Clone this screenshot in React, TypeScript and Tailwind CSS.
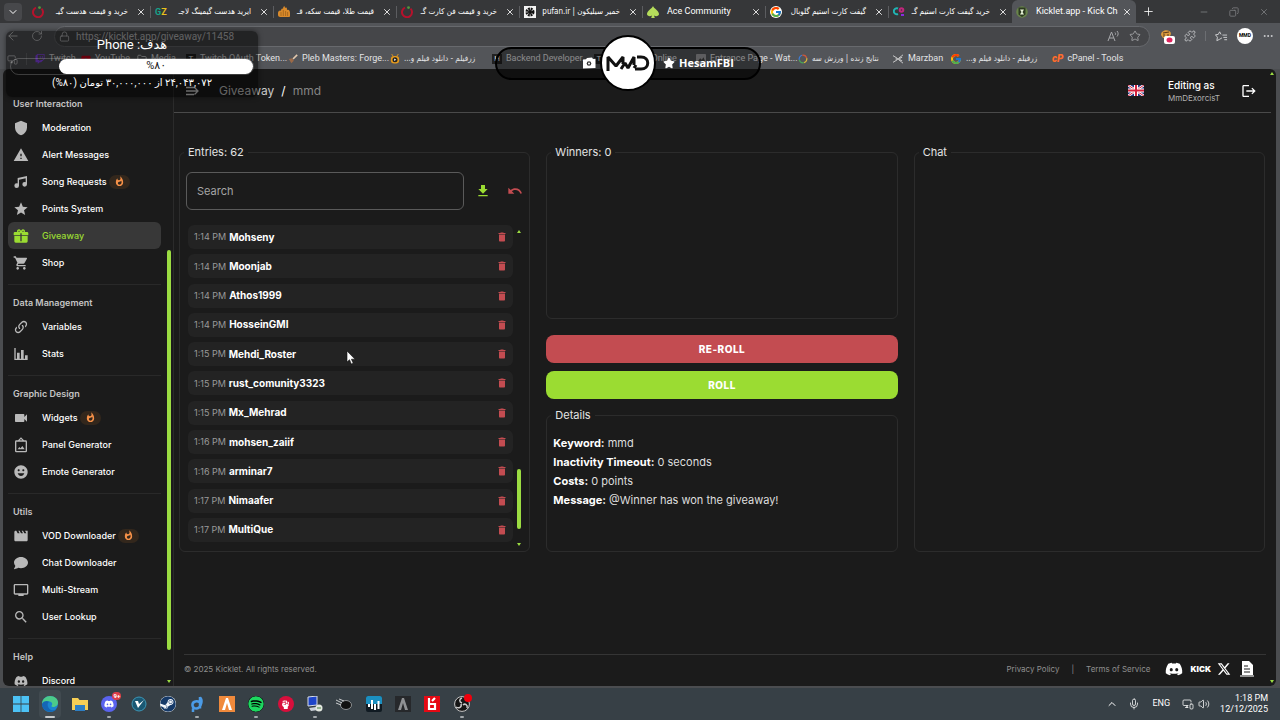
import React, { useState } from 'react'
import { FaComment, FaDiscord, FaSpotify, FaSteam, FaStar, FaTwitch, FaYoutube, FaXTwitter, FaHandFist } from 'react-icons/fa6'
import { FcGoogle } from 'react-icons/fc'
import {
  MdShield, MdWarning, MdStar, MdShoppingCart, MdVideocam, MdEmojiEmotions, MdMovie, MdTv, MdSearch,
  MdWhatshot, MdDownload, MdUndo, MdDelete, MdLogout,
} from 'react-icons/md'
import { ArrowLeft, ChevronDown, ChevronUp, Copy, Ellipsis, Folder, Lock, Mic, Minus, MonitorSmartphone, Plus, Puzzle, RotateCw, Star, Volume2, X } from 'lucide-react'

type NavItem = { label: string; icon: React.ReactNode; hot?: boolean; active?: boolean }
type NavGroup = { title: string; items: NavItem[] }
type Tab = { title: string; icon: React.ReactNode; ltr?: boolean; active?: boolean }
type Bookmark = { title: string; icon: React.ReactNode; width: string; rtl?: boolean }

const MdiIcon = ({ d }: { d: string }) => (
  <svg viewBox="0 0 24 24" fill="currentColor" className="size-4"><path d={d} /></svg>
)

const musicPath = 'M21,3V15.5A3.5,3.5 0 0,1 17.5,19A3.5,3.5 0 0,1 14,15.5A3.5,3.5 0 0,1 17.5,12C18.04,12 18.55,12.12 19,12.34V6.47L9,8.6V17.5A3.5,3.5 0 0,1 5.5,21A3.5,3.5 0 0,1 2,17.5A3.5,3.5 0 0,1 5.5,14C6.04,14 6.55,14.12 7,14.34V6L21,3Z'
const giftPath = 'M9.06,1.93C7.17,1.92 5.33,3.74 6.17,6H3A2,2 0 0,0 1,8V10A1,1 0 0,0 2,11H11V8H13V11H22A1,1 0 0,0 23,10V8A2,2 0 0,0 21,6H17.83C19,2.73 14.6,0.42 12.57,3.24L12,4L11.43,3.22C10.8,2.33 9.93,1.94 9.06,1.93M9,4C9.89,4 10.34,5.08 9.71,5.71C9.08,6.34 8,5.89 8,5A1,1 0 0,1 9,4M15,4C15.89,4 16.34,5.08 15.71,5.71C15.08,6.34 14,5.89 14,5A1,1 0 0,1 15,4M2,12V20A2,2 0 0,0 4,22H20A2,2 0 0,0 22,20V12H13V20H11V12H2Z'
const linkPath = 'M10.59,13.41C11,13.8 11,14.44 10.59,14.83C10.2,15.22 9.56,15.22 9.17,14.83C7.22,12.88 7.22,9.71 9.17,7.76V7.76L12.71,4.22C14.66,2.27 17.83,2.27 19.78,4.22C21.73,6.17 21.73,9.34 19.78,11.29L18.29,12.78C18.3,11.96 18.17,11.14 17.89,10.36L18.36,9.88C19.54,8.71 19.54,6.81 18.36,5.64C17.19,4.46 15.29,4.46 14.12,5.64L10.59,9.17C9.41,10.34 9.41,12.24 10.59,13.41M13.41,9.17C13.8,8.78 14.44,8.78 14.83,9.17C16.78,11.12 16.78,14.29 14.83,16.24V16.24L11.29,19.78C9.34,21.73 6.17,21.73 4.22,19.78C2.27,17.83 2.27,14.66 4.22,12.71L5.71,11.22C5.7,12.04 5.83,12.86 6.11,13.65L5.64,14.12C4.46,15.29 4.46,17.19 5.64,18.36C6.81,19.54 8.71,19.54 9.88,18.36L13.41,14.83C14.59,13.66 14.59,11.76 13.41,10.59C13,10.2 13,9.56 13.41,9.17Z'
const chartPath = 'M22,21H2V3H4V19H6V10H10V19H12V6H16V19H18V14H22V21Z'
const framePath = 'M12,0.5L7.5,5H5A2,2 0 0,0 3,7V21A2,2 0 0,0 5,23H19A2,2 0 0,0 21,21V7A2,2 0 0,0 19,5H16.5L12,0.5M12,3L14,5H10L12,3M5,7H19V21H5V7M7,18.5L9.5,15L11.3,17L14,13.5L17.5,18.5H7Z'

const navGroups: NavGroup[] = [
  {
    title: 'User Interaction',
    items: [
      { label: 'Moderation', icon: <MdShield className="size-4" /> },
      { label: 'Alert Messages', icon: <MdWarning className="size-4" /> },
      { label: 'Song Requests', icon: <MdiIcon d={musicPath} />, hot: true },
      { label: 'Points System', icon: <MdStar className="size-4" /> },
      { label: 'Giveaway', icon: <MdiIcon d={giftPath} />, active: true },
      { label: 'Shop', icon: <MdShoppingCart className="size-4" /> },
    ],
  },
  {
    title: 'Data Management',
    items: [
      { label: 'Variables', icon: <MdiIcon d={linkPath} /> },
      { label: 'Stats', icon: <MdiIcon d={chartPath} /> },
    ],
  },
  {
    title: 'Graphic Design',
    items: [
      { label: 'Widgets', icon: <MdVideocam className="size-4" />, hot: true },
      { label: 'Panel Generator', icon: <MdiIcon d={framePath} /> },
      { label: 'Emote Generator', icon: <MdEmojiEmotions className="size-4" /> },
    ],
  },
  {
    title: 'Utils',
    items: [
      { label: 'VOD Downloader', icon: <MdMovie className="size-4" />, hot: true },
      { label: 'Chat Downloader', icon: <FaComment className="size-[14px]" /> },
      { label: 'Multi-Stream', icon: <MdTv className="size-4" /> },
      { label: 'User Lookup', icon: <MdSearch className="size-4" /> },
    ],
  },
  { title: 'Help', items: [{ label: 'Discord', icon: <FaDiscord className="size-[14px]" /> }] },
]

const entries = [
  { time: '1:14 PM', name: 'Mohseny' },
  { time: '1:14 PM', name: 'Moonjab' },
  { time: '1:14 PM', name: 'Athos1999' },
  { time: '1:14 PM', name: 'HosseinGMI' },
  { time: '1:15 PM', name: 'Mehdi_Roster' },
  { time: '1:15 PM', name: 'rust_comunity3323' },
  { time: '1:15 PM', name: 'Mx_Mehrad' },
  { time: '1:16 PM', name: 'mohsen_zaiif' },
  { time: '1:16 PM', name: 'arminar7' },
  { time: '1:17 PM', name: 'Nimaafer' },
  { time: '1:17 PM', name: 'MultiQue' },
]

const details = [
  ['Keyword:', 'mmd'],
  ['Inactivity Timeout:', '0 seconds'],
  ['Costs:', '0 points'],
  ['Message:', '@Winner has won the giveaway!'],
]

/* tab and bookmark favicons */
const RingIcon = () => (
  <svg viewBox="0 0 12 12" className="size-3 shrink-0">
    <path d="M4 1.6A5 5 0 1 0 9.5 2.6" fill="none" stroke="#b5122c" strokeWidth="2" />
    <circle cx="7.5" cy="1.6" r="1.4" fill="#4f9a3c" />
  </svg>
)
const GzIcon = () => (
  <span className="font-[Roboto,sans-serif] text-[9px] leading-3 font-bold text-[#14a38b]">G<span className="text-[#e8c21c]">Z</span></span>
)
const GoldIcon = () => (
  <svg viewBox="0 0 12 12" className="size-3 shrink-0" fill="#d98a2b">
    <path d="M0 7c0-2 2-3 3-2 0-2 1-3 2-2 0-3 2-4 2-1 2-1 2 0 2 2 2-1 3 1 3 3v3c0 1-1 1-2 1H2c-1 0-2-1-2-2z" />
    <path d="M3 6v4M5.300 4v6M7.600 5v5M9.600 6v4" stroke="#8a5416" strokeWidth=".6" />
  </svg>
)
const SiliconIcon = () => (
  <svg viewBox="0 0 12 12" className="size-3 shrink-0">
    <rect width="12" height="12" fill="#f4f4f4" />
    <circle cx="6" cy="6" r="3" fill="none" stroke="#111" strokeWidth="3" strokeDasharray="1.7 .7" />
    <circle cx="6" cy="6" r="2" fill="#111" />
  </svg>
)
const AceIcon = () => (
  <svg viewBox="0 0 12 12" className="size-3 shrink-0" fill="#b5dd5b">
    <path d="M6 0C7 2.500 12 5 12 8c0 2-3 3-5 1.500L7.800 12H4.200L5 9.500C3 11 0 10 0 8 0 5 5 2.500 6 0z" />
  </svg>
)
const DotsIcon = () => (
  <svg viewBox="0 0 12 12" className="size-3 shrink-0" fill="none" strokeWidth="2">
    <path d="M5 2.500A3 3 0 1 0 5 8" stroke="#20b5b5" />
    <circle cx="8.500" cy="4" r="1.800" stroke="#c2267c" />
    <path d="M8 9h3" stroke="#8a2be2" />
  </svg>
)
const KickletIcon = () => (
  <svg viewBox="0 0 12 12" className="size-3 shrink-0">
    <circle cx="6" cy="6" r="5.800" fill="#68844a" />
    <path d="M2.500 1.500h7v7L6 11 2.500 8.500z" fill="#2d3a22" />
    <path d="M4 3.500h4L6.500 6 8 8.500H4L5.500 6z" fill="#e9f5d8" />
  </svg>
)
const PlayIcon = () => (
  <svg viewBox="0 0 12 12" className="size-[10px] shrink-0">
    <path d="M2 0l2 3M10 0L8 3" stroke="#e59a1c" />
    <rect x="1" y="2.500" width="10" height="9" rx="4" fill="#e59a1c" />
    <circle cx="6" cy="7" r="3" fill="#222" />
    <path d="M5 5.500L7.500 7 5 8.500z" fill="#fff" />
  </svg>
)
const BrushIcon = () => (
  <svg viewBox="0 0 12 12" className="size-[10px] shrink-0">
    <path d="M11 1L6 6" stroke="#e3c9ae" strokeWidth="2" />
    <path d="M1 6l4-1 2 3-3 3z" fill="#9b6a48" />
  </svg>
)
const LetterIcon = ({ letter }: { letter: string }) => (
  <span className="flex size-[10px] shrink-0 items-center justify-center bg-[#222] text-[8px] leading-none text-[#eee]">{letter}</span>
)
const SwirlIcon = () => (
  <svg viewBox="0 0 12 12" className="size-[10px] shrink-0" fill="none" strokeWidth="1.500">
    <path d="M1.500 7A5 5 0 0 1 5 1.500" stroke="#3e7bd6" />
    <path d="M5 1.500A5 5 0 0 1 10.500 5" stroke="#c9573d" />
    <path d="M10.500 5A5 5 0 0 1 7 10.500" stroke="#d9b63a" />
    <path d="M7 10.500A5 5 0 0 1 1.500 7" stroke="#49a657" />
  </svg>
)
const MarzbanIcon = () => (
  <svg viewBox="0 0 14 12" className="h-[10px] w-3 shrink-0" fill="none" stroke="#ddd">
    <path d="M1 2l5 3v2l-5 3M13 1L8 5v2l5 4M4 6h6M9 5l3-1M9 7l3 1" />
  </svg>
)
const PageIcon = () => (
  <svg viewBox="0 0 12 12" className="size-[10px] shrink-0">
    <rect width="12" height="12" rx="1" fill="#9b9c9e" />
    <path d="M2 9l3-4 2 2 2-3 2 5z" fill="#444" />
  </svg>
)

const tabs: Tab[] = [
  { title: 'خرید و قیمت هدست گیـ', icon: <RingIcon /> },
  { title: 'ایرید هدست گیمینگ لاجـ', icon: <GzIcon /> },
  { title: 'قیمت طلا، قیمت سکه، قـ', icon: <GoldIcon /> },
  { title: 'خرید و قیمت فن کارت گـ', icon: <RingIcon /> },
  { title: 'خمیر سیلیکون | pufan.ir', icon: <SiliconIcon /> },
  { title: 'Ace Community', icon: <AceIcon />, ltr: true },
  { title: 'گیفت کارت استیم گلوبال', icon: <FcGoogle className="size-3 shrink-0 rounded-full bg-white" /> },
  { title: 'خرید گیفت کارت استیم گـ', icon: <DotsIcon /> },
  { title: 'Kicklet.app - Kick Chatb', icon: <KickletIcon />, ltr: true, active: true },
]

const bookmarks: Bookmark[] = [
  { title: 'Twitch', icon: <FaTwitch className="size-[10px] shrink-0 text-[#9147ff]" />, width: 'w-[46px]' },
  { title: 'YouTube', icon: <FaYoutube className="size-[10px] shrink-0 text-[#d0021b]" />, width: 'w-[56px]' },
  { title: 'Media', icon: <Folder className="size-[10px] shrink-0" />, width: 'w-[49px]' },
  { title: 'Twitch OAuth Token...', icon: <LetterIcon letter="T" />, width: 'w-[102px]' },
  { title: 'Pleb Masters: Forge...', icon: <BrushIcon />, width: 'w-[102px]' },
  { title: 'زرفیلم - دانلود فیلم و...', icon: <PlayIcon />, width: 'w-[102px]', rtl: true },
  { title: 'Backend Developer...', icon: <LetterIcon letter="H" />, width: 'w-[102px]' },
  { title: 'Text Tools Online', icon: <LetterIcon letter="T" />, width: 'w-[102px]' },
  { title: 'Entrance Page - Wat...', icon: <PageIcon />, width: 'w-[102px]' },
  { title: 'نتایج زنده | ورزش سه', icon: <SwirlIcon />, width: 'w-[94px]', rtl: true },
  { title: 'Marzban', icon: <MarzbanIcon />, width: 'w-[58px]' },
  { title: 'زرفیلم - دانلود فیلم و...', icon: <FcGoogle className="size-3 shrink-0" />, width: 'w-[102px]', rtl: true },
  { title: 'cPanel - Tools', icon: <span className="text-[10px] leading-none font-black text-[#ff6c2c] italic">cP</span>, width: 'w-[70px]' },
]

const TabBar = () => (
  <div className="flex h-[23px] items-center bg-[#363739] pl-1">
    <button aria-label="Tab actions" className="flex h-[18px] w-[18px] items-center justify-center rounded bg-[#47484b]">
      <ChevronDown className="size-3" />
    </button>
    <div className="ml-[6px] flex h-full min-w-0 items-end">
      {tabs.map((tab, i) => (
        <div
          key={i}
          className={
            tab.active
              ? 'flex h-[23px] w-[124px] min-w-0 items-center gap-1 rounded-t-md bg-[#535559] px-1'
              : 'flex h-[23px] w-[123px] min-w-0 items-center gap-1 px-1'
          }
        >
          {tab.icon}
          <span
            dir={tab.ltr ? 'ltr' : 'rtl'}
            className={
              tab.ltr
                ? 'min-w-0 flex-1 overflow-hidden pl-1 text-[9px] whitespace-nowrap'
                : 'min-w-0 flex-1 overflow-hidden pr-1 font-[DejaVu_Sans_Condensed,DejaVu_Sans,sans-serif] text-[8px] whitespace-nowrap'
            }
          >
            {tab.title}
          </span>
          <button aria-label="Close tab"><X className="size-[10px]" /></button>
          {!tab.active && i !== 7 && <span className="-mr-1 h-3 w-px shrink-0 bg-[#5c5d60]" />}
        </div>
      ))}
    </div>
    <button aria-label="New tab" className="ml-1.5"><Plus className="size-[13px]" strokeWidth={1.5} /></button>
    <div className="ml-auto flex gap-5 pr-[11px] text-[#7c7d80]">
      <Minus className="size-[10px]" />
      <Copy className="size-[10px] -scale-x-100" />
      <X className="size-[10px]" />
    </div>
  </div>
)

const AddressBar = () => (
  <div className="flex h-[26px] items-center bg-[#535559] text-[#d2d3d5]">
    <button aria-label="Back" className="ml-[6px]"><ArrowLeft className="size-[14px]" strokeWidth={1.5} /></button>
    <button aria-label="Reload" className="ml-[11px]"><RotateCw className="size-3" strokeWidth={1.5} /></button>
    <div className="ml-[11px] flex h-[21px] min-w-0 flex-1 items-center rounded-full border border-[#67696d] bg-[#454649] px-[4px]">
      <Lock className="size-[11px] shrink-0" strokeWidth={1.5} />
      <input
        aria-label="Address"
        className="ml-[6px] min-w-0 flex-1 bg-transparent text-[10px] text-[#c2c3c5] outline-none"
        defaultValue="https://kicklet.app/giveaway/11458"
      />
      <svg viewBox="0 0 12 12" className="mr-[10px] size-3 text-[#a8a9ac]" fill="none" stroke="currentColor">
        <path d="M1 11L4.500 2 8 11M2.300 8h4.400M8 2.500c.8.8.8 1.700 0 2.500M10 1c1.500 1.600 1.500 3.900 0 5.500" />
      </svg>
      <Star className="mr-1 size-3 text-[#b4b5b8]" strokeWidth={1.5} />
    </div>
    <div className="flex items-center gap-[9px] pr-[6px] pl-[11px]">
      <svg viewBox="0 0 14 15" className="h-[15px] w-[14px]">
        <path d="M0 6C0 0 10 0 10 5L8 9H2z" fill="#d99a3c" />
        <path d="M2 4l6-1M3 8V5M7 8V5" stroke="#5b3a1c" />
        <rect x="3" y="7" width="11" height="8" rx="2" fill="#fff" />
        <ellipse cx="8.500" cy="11" rx="3" ry="2.500" fill="#e0245e" />
      </svg>
      <Puzzle className="size-3" strokeWidth={1.5} />
      <span className="h-[10px] w-px bg-[#6c6e72]" />
      <svg viewBox="0 0 14 12" className="h-3 w-[13px]" fill="none" stroke="currentColor">
        <path d="M7.500 8L5 9.500 2 11l.6-3.700L.5 4.700l3-.4L5 1.500l1.500 2.800M8 5h5M9 7.500h4M10 10h3" />
      </svg>
      <span className="flex size-4 items-center justify-center rounded-full bg-white text-[5px] font-bold text-black">MMD</span>
      <Ellipsis className="size-3" />
    </div>
  </div>
)

const BookmarkBar = () => (
  <div className="flex h-5 items-center overflow-hidden bg-[#535559] pl-[7px] text-[#e3e4e6]">
    <MonitorSmartphone className="size-[11px] shrink-0" strokeWidth={1.5} />
    <span className="mx-[8px] h-3 w-px shrink-0 bg-[#6c6e72]" />
    {bookmarks.map((mark, i) => (
      <a key={i} href="#" className={`flex shrink-0 items-center gap-1 whitespace-nowrap ${mark.width}`}>
        {mark.icon}
        <span
          dir={mark.rtl ? 'rtl' : 'ltr'}
          className={mark.rtl ? 'font-[DejaVu_Sans_Condensed,DejaVu_Sans,sans-serif] text-[8px]' : 'text-[9px]'}
        >
          {mark.title}
        </span>
      </a>
    ))}
  </div>
)

const Sidebar = () => (
  <nav className="relative w-[171px] shrink-0 overflow-hidden border-r border-[#2b2b2b] pt-6 pr-3 pl-[5px]">
    {navGroups.map((group, i) => (
      <div key={group.title}>
        {i > 0 && <hr className="mt-2 mb-[7px] border-[#292929]" />}
        <h2 className="pl-[5px] text-[9px] leading-[21px] font-semibold text-[#c4c4c4]">{group.title}</h2>
        {group.items.map((item) => (
          <a
            key={item.label}
            href="#"
            className={
              item.active
                ? 'flex h-[27px] items-center rounded-md bg-[#383838] text-[9px] font-medium text-[#9bdc32]'
                : 'flex h-[27px] items-center rounded-md text-[9px] font-medium text-white'
            }
          >
            <span className={item.active ? 'flex w-[26px] justify-center' : 'flex w-[26px] justify-center text-[#b9b9b9]'}>{item.icon}</span>
            <span className="ml-2">{item.label}</span>
            {item.hot && (
              <span className="ml-[2px] flex h-[14px] w-[21px] items-center justify-center rounded-full bg-[#33271c] text-[#f79148]">
                <MdWhatshot className="size-[11px]" />
              </span>
            )}
          </a>
        ))}
      </div>
    ))}
    <span className="absolute top-[181px] right-[2px] bottom-9 w-1 rounded-full bg-[#9bdc42]" />
    <span className="absolute right-[2px] bottom-[3px] border-x-2 border-t-[3px] border-x-transparent border-t-[#9bdc42]" />
  </nav>
)

const UkFlag = () => (
  <svg viewBox="0 0 32 22" className="h-[11px] w-4">
    <rect width="32" height="22" fill="#27347f" />
    <path d="M0 0l32 22M32 0L0 22" stroke="#fff" strokeWidth="5" />
    <path d="M0 0l32 22M32 0L0 22" stroke="#d3213d" strokeWidth="2" />
    <path d="M16 0v22M0 11h32" stroke="#fff" strokeWidth="8" />
    <path d="M16 0v22M0 11h32" stroke="#d3213d" strokeWidth="4" />
  </svg>
)

const Header = () => (
  <header className="mr-[5px] flex h-11 items-center border-b border-[#4a4a4a] pr-[14px] pl-[11px]">
    <button aria-label="Toggle menu" className="text-[#d5d5d5]">
      <svg viewBox="0 0 14 12" className="h-3 w-[14px]" fill="none" stroke="currentColor" strokeWidth="1.300">
        <path d="M1 2.500h8M1 6h12M1 9.500h8M9.500 2.500L13 6 9.500 9.500" />
      </svg>
    </button>
    <div className="ml-[20px] flex items-center gap-[7px] text-xs text-[#b4b4b4]">
      <a href="#" className="text-[#c9c9c9]">Giveaway</a>
      <span className="text-white">/</span>
      <span className="text-[#858585]">mmd</span>
    </div>
    <div className="ml-auto flex items-center">
      <UkFlag />
      <div className="ml-6 w-[57px]">
        <p className="text-[10px] leading-[14px] font-medium text-white">Editing as</p>
        <p className="text-[8px] leading-3 text-[#b0b0b0]">MmDExorcisT</p>
      </div>
      <button aria-label="Log out" className="ml-4 text-white"><MdLogout className="size-4" /></button>
    </div>
  </header>
)

const Panel = ({ title, className, children }: { title: string; className: string; children?: React.ReactNode }) => (
  <fieldset className={`min-w-0 rounded-md border border-[#2c2c2c] ${className}`}>
    <legend className="ml-1 px-1 text-[11px] leading-4 text-[#e4e4e4]">{title}</legend>
    {children}
  </fieldset>
)

const Entries = () => {
  const [search, setSearch] = useState('')
  const shown = entries.filter((entry) => entry.name.toLowerCase().includes(search.toLowerCase()))

  return (
    <Panel title="Entries: 62" className="relative flex h-[408px] flex-col pb-[9px]">
      <div className="mx-[6px] mt-3 flex items-center">
        <input
          aria-label="Search"
          placeholder="Search"
          value={search}
          onChange={(e) => setSearch(e.target.value)}
          className="h-[38px] min-w-0 flex-1 rounded-md border border-[#5a5a5a] bg-transparent px-[10px] text-[11px] text-white outline-none placeholder:text-[#a5a5a5]"
        />
        <button aria-label="Download entries" className="ml-[11px] text-[#9bdc32]"><MdDownload className="size-4" /></button>
        <button aria-label="Undo" className="ml-4 text-[#c34c51]"><MdUndo className="size-4" /></button>
      </div>
      <ul className="mt-[15px] mr-4 ml-2 flex flex-1 flex-col justify-between text-[10px]">
        {shown.map((entry) => (
          <li key={entry.name} className="flex h-6 items-center rounded-md bg-[#232323] pr-[5px] pl-[6px]">
            <span className="text-[9px] text-[#9a9a9a]">{entry.time}</span>
            <b className="ml-[3px] font-bold text-white">{entry.name}</b>
            <button aria-label={`Remove ${entry.name}`} className="ml-auto text-[#c34c51]"><MdDelete className="size-3" /></button>
          </li>
        ))}
      </ul>
      <span className="absolute right-2 bottom-[22px] h-[60px] w-1 rounded-full bg-[#9bdc42]" />
      <span className="absolute top-[70px] right-2 border-x-2 border-b-[3px] border-x-transparent border-b-[#9bdc42]" />
      <span className="absolute right-2 bottom-[5px] border-x-2 border-t-[3px] border-x-transparent border-t-[#9bdc42]" />
    </Panel>
  )
}

const Footer = () => (
  <footer className="mx-[10px] mt-auto mb-1 flex h-7 items-center border-t border-[#353535] text-[8px] text-[#8f8f8f]">
    <span>© 2025 Kicklet. All rights reserved.</span>
    <div className="ml-auto flex items-center pr-[11px]">
      <a href="#">Privacy Policy</a>
      <span className="mx-3">|</span>
      <a href="#">Terms of Service</a>
      <a href="#" aria-label="Discord" className="ml-[14px] text-white"><FaDiscord className="size-[18px]" /></a>
      <a href="#" className="ml-2 text-[8px] font-black text-white">KICK</a>
      <a href="#" aria-label="X" className="ml-[6px] text-white"><FaXTwitter className="size-[14px]" /></a>
      <a href="#" aria-label="Documentation" className="ml-2 text-white">
        <svg viewBox="0 0 16 16" className="size-4">
          <path d="M3 0h7l4 4v10H3z" fill="#fff" />
          <path d="M5 5h4M5 8h6M5 11h6" stroke="#1c1c1c" strokeWidth="1.200" />
          <path d="M1 15h14" stroke="#bbb" strokeWidth="1.500" />
        </svg>
      </a>
    </div>
  </footer>
)

/* donation goal shown over the stream */
const GoalWidget = () => (
  <div
    dir="rtl"
    className="absolute top-[31px] left-[6px] h-[66px] w-[252px] rounded-md bg-black/50 pt-[5px] text-center font-[Roboto,DejaVu_Sans,sans-serif] text-white shadow-[0_0_5px_rgba(0,0,0,0.5)]"
  >
    <p className="text-[13px] leading-[18px]">هدف: Phone</p>
    <div className="mx-[4px] mt-1 flex h-[17px] rounded-full border border-white/20">
      <div className="flex w-4/5 items-center justify-center rounded-full bg-white text-[11px] text-[#222]">%۸۰</div>
    </div>
    <p className="text-[10px] leading-4">۲۴,۰۴۳,۰۷۲ از ۳۰,۰۰۰,۰۰۰ تومان (۸۰%)</p>
  </div>
)

const StreamBadge = () => (
  <div className="absolute top-[35px] left-1/2 flex h-14 w-[266px] -translate-x-[145px] items-center justify-center">
    <div className="absolute inset-x-0 top-3 h-[33px] rounded-full border-2 border-black bg-black/40" />
    <svg viewBox="0 0 14 12" className="absolute left-[87px] h-3 w-[14px]">
      <path d="M1 2.500l3-.3L5 1l5-.5 1 1.500 2.500-.2V11L1 11.500z" fill="#fff" />
      <circle cx="7" cy="6.500" r="2.300" fill="#333" />
      <circle cx="7" cy="6.500" r="1" fill="#fff" />
    </svg>
    <div className="relative flex size-14 items-center justify-center rounded-full border-2 border-black bg-white">
      <svg viewBox="0 0 44 18" className="h-[18px] w-11" fill="none" stroke="#111" strokeWidth="3" strokeLinejoin="bevel">
        <path d="M2 17V3l8 9 7-9v7M15 15l4-6 3 5 6-11v8M28 14l2-3M31 3h4c9 0 9 12 0 12h-6" />
      </svg>
    </div>
    <div className="absolute left-[168px] flex items-center gap-1 font-[Open_Sans,sans-serif] text-[11px] font-bold text-white">
      <FaStar className="size-3" />
      HesamFBI
    </div>
  </div>
)

const EdgeIcon = () => (
  <svg viewBox="0 0 16 16" className="size-4">
    <circle cx="8" cy="8" r="8" fill="#1b84d0" />
    <path d="M0 8C0 3 4 0 8 0c5 0 8 3 8 6.500C16 9.500 13.500 11 11 11c-1.500 0-2-.8-1-2 .8-2-1-3.500-3-3.500C4 5.500 1 6.500 0 8z" fill="#4ccb8a" />
    <path d="M0 8c1-3 5-4 7.500-2C5 6 4.500 12 9 14c2 .8 4 0 5.500-1C11 18 0 16 0 8z" fill="#1566b5" />
  </svg>
)
const apps: { name: string; icon: React.ReactNode; open?: boolean; current?: boolean }[] = [
  { name: 'Start', icon: <svg viewBox="0 0 16 16" className="size-4" fill="#4cc2f5"><path d="M0 0h7.600v7.600H0zM8.400 0H16v7.600H8.400zM0 8.400h7.600V16H0zM8.400 8.400H16V16H8.400z" /></svg> },
  { name: 'Edge', icon: <EdgeIcon />, current: true },
  { name: 'Files', icon: <svg viewBox="0 0 16 16" className="size-4"><path d="M0 2h6l1.500 2H16v10H0z" fill="#f7cf55" /><path d="M3 9h10v6H3z" fill="#2e7fc4" /></svg> },
  {
    name: 'Discord',
    open: true,
    icon: (
      <span className="relative flex size-4 items-center justify-center rounded-full bg-[#5a63ee] text-white">
        <FaDiscord className="size-[10px]" />
        <span className="absolute -top-1 -right-1 rounded-full bg-[#dc3e48] px-px text-[6px] leading-2 font-bold">9+</span>
      </span>
    ),
  },
  { name: 'V2ray', icon: <svg viewBox="0 0 16 16" className="size-4"><circle cx="8" cy="8" r="7" fill="#1a5873" stroke="#3d96b5" /><path d="M4 5l3 7 6-8-5 4-1-3z" fill="#fff" /></svg> },
  { name: 'Steam', icon: <FaSteam className="size-4 rounded-full bg-[#f3f6fa] text-[#163a68]" /> },
  { name: 'Player', open: true, icon: <svg viewBox="0 0 16 16" className="size-4" fill="none" stroke="#4b9be6" strokeWidth="2.500"><path d="M4 16v-3.500M11 1v11.500M11 6.500C7 4 3 6 3.500 9.500S8 13 10 11.500 14 4 11 1.500" /></svg> },
  { name: 'FiveM', icon: <svg viewBox="0 0 16 16" className="size-4"><rect width="16" height="16" fill="#f08a3c" /><path d="M3 14L7 2h2l4 12h-3L8 7l-2 7z" fill="#fff" /></svg> },
  { name: 'Spotify', open: true, icon: <FaSpotify className="size-4 rounded-full bg-black text-[#1ed760]" /> },
  { name: 'Riot', icon: <span className="flex size-4 items-center justify-center rounded-full bg-[#d80f3c] text-white"><FaHandFist className="size-[9px]" /></span> },
  { name: 'Remote Desktop', open: true, icon: <svg viewBox="0 0 16 16" className="size-4"><path d="M1 1l9-1v9l-9 1z" fill="#1e45c9" stroke="#d8dde5" /><path d="M2 12l7-1 2 3-7 1z" fill="#ccd2da" /><circle cx="12" cy="12" r="3.500" fill="#e4e8e0" /><path d="M10 12h4" stroke="#47823f" /></svg> },
  { name: 'Comet', icon: <svg viewBox="0 0 16 16" className="size-4"><ellipse cx="10" cy="9" rx="5.500" ry="4.500" fill="#111" stroke="#8c8f92" /><path d="M0 4l6 3M0 7l5 2M3 3l5 2" stroke="#c9cbcd" /></svg> },
  { name: 'Mixer', icon: <svg viewBox="0 0 16 16" className="size-4"><rect width="16" height="16" rx="2" fill="#101a22" /><path d="M0 2a2 2 0 0 1 2-2h12a2 2 0 0 1 2 2v6H0z" fill="#1b8fc0" /><path d="M3 8v3M6 4v9M9 8v6M12.500 5v8" stroke="#fff" strokeWidth="2" /></svg> },
  { name: 'FiveM Dev', icon: <svg viewBox="0 0 16 16" className="size-4"><rect width="16" height="16" fill="#26282b" /><path d="M3 14L7 2h2l4 12h-3L8 7l-2 7z" fill="#8f9194" /></svg> },
  { name: 'Launcher', icon: <svg viewBox="0 0 16 16" className="size-4"><rect width="16" height="16" fill="#e50914" /><path d="M5 2v11h6V8H5M8 5l3-3" stroke="#fff" strokeWidth="2.200" fill="none" /></svg> },
  {
    name: 'OBS',
    open: true,
    icon: (
      <svg viewBox="0 0 16 16" className="size-4 overflow-visible">
        <circle cx="8" cy="8" r="7.400" fill="#151515" stroke="#c9c9c9" />
        <path d="M8 7c-3-1-3-4 0-5M7 8c1 3-2 5-5 3M9 9c2-2 5 0 4 3" stroke="#c9c9c9" fill="none" strokeWidth="1.500" />
        <circle cx="14" cy="2" r="4" fill="#f0000c" />
      </svg>
    ),
  },
]

const Taskbar = () => (
  <div className="flex h-8 items-center justify-between bg-[#374046] pr-[12px] pl-[10px] text-white">
    <div className="flex w-[463px] justify-between">
      {apps.map((app) => (
        <button
          key={app.name}
          aria-label={app.name}
          className={
            app.current
              ? 'relative flex h-7 w-[22px] items-center justify-center rounded bg-[#414a50]'
              : 'relative flex h-7 w-[22px] items-center justify-center'
          }
        >
          {app.icon}
          {app.current && <span className="absolute bottom-0 h-[2px] w-[10px] rounded-full bg-[#c5c9cc]" />}
          {app.open && <span className="absolute bottom-0 h-[2px] w-1 rounded-full bg-[#a3a8ac]" />}
        </button>
      ))}
    </div>
    <div className="flex items-center text-[9px]">
      <ChevronUp className="size-3" />
      <Mic className="ml-[10px] size-3" strokeWidth={1.5} />
      <span className="ml-3">ENG</span>
      <MonitorSmartphone className="ml-3 size-3" strokeWidth={1.5} />
      <Volume2 className="ml-1 size-3" strokeWidth={1.5} />
      <div className="ml-[10px] text-right leading-[11px]">
        <p>1:18 PM</p>
        <p>12/12/2025</p>
      </div>
    </div>
  </div>
)

const App = () => {
  return (
    <div className="relative flex h-screen min-h-[720px] flex-col overflow-hidden bg-[#4b4d50] font-[Roboto,DejaVu_Sans,sans-serif] text-white">
      <TabBar />
      <AddressBar />
      <BookmarkBar />

      <div className="relative mr-1 mb-[2px] ml-[3px] flex min-h-0 flex-1 rounded-md bg-[#1b1b1b] font-[Inter,sans-serif]">
        <Sidebar />
        <main className="flex min-w-0 flex-1 flex-col">
          <Header />
          <div className="mt-[31px] mr-[11px] ml-[5px] grid grid-cols-3 gap-4">
            <Entries />
            <div className="flex h-[408px] min-w-0 flex-col">
              <Panel title="Winners: 0" className="h-[175px]" />
              <button className="mt-4 h-7 rounded-lg bg-[#c34c51] text-[10px] font-extrabold tracking-wider">RE-ROLL</button>
              <button className="mt-2 h-7 rounded-lg bg-[#9bdc32] text-[10px] font-extrabold tracking-wider">ROLL</button>
              <Panel title="Details" className="mt-2 flex-1">
                <div className="mx-[6px] mt-[11px] text-[11px] leading-[19px]">
                  {details.map(([label, value]) => (
                    <p key={label}><b>{label}</b> <span className="text-[#dedede]">{value}</span></p>
                  ))}
                </div>
              </Panel>
            </div>
            <Panel title="Chat" className="h-[408px]" />
          </div>
          <Footer />
        </main>
        <span className="absolute top-[3px] right-[2px] border-x-2 border-b-[3px] border-x-transparent border-b-[#9bdc42]" />
        <span className="absolute right-[2px] bottom-[3px] border-x-2 border-t-[3px] border-x-transparent border-t-[#9bdc42]" />
      </div>

      <Taskbar />
      <GoalWidget />
      <StreamBadge />

      <svg viewBox="0 0 10 15" className="absolute top-[350px] left-[346px] h-[15px] w-[10px]">
        <path d="M1 1v11l2.500-2.300L5.300 14l1.900-.8-1.800-4H9z" fill="#fff" stroke="#111" strokeWidth=".6" />
      </svg>
    </div>
  )
}

export default App
